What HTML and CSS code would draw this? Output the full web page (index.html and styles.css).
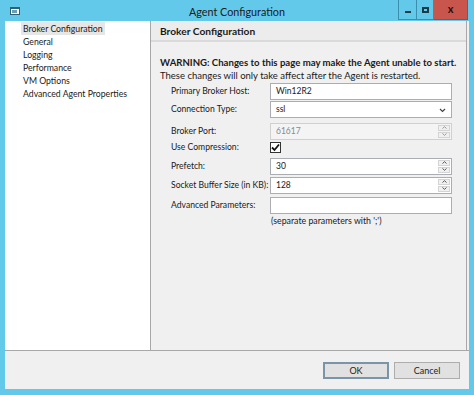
FILE: index.html
```html
<!DOCTYPE html>
<html lang="en">
<head>
    <meta charset="UTF-8">
    <title>Agent Configuration</title>
    <link rel="stylesheet" href="styles.css">
</head>
<body>
    <div class="window">
        <div class="titlebar">
            <svg class="app-icon" width="12" height="10" viewBox="0 0 12 10">
                <rect x="1.5" y="1.5" width="9" height="7" fill="#fff" stroke="#2f6076" stroke-width="1"/>
                <rect x="1" y="1" width="10" height="2" fill="#2f6076"/>
                <rect x="3" y="4" width="5" height="3" fill="#6a9fb5"/>
            </svg>
            <div class="title">Agent Configuration</div>
            <div class="controls">
                <div class="ctl min"><span class="bar"></span></div>
                <div class="ctl max"><span class="box"></span></div>
                <div class="ctl close">x</div>
            </div>
        </div>

        <div class="client">
            <div class="main">
                <ul class="tree">
                    <li class="selected">Broker Configuration</li>
                    <li>General</li>
                    <li>Logging</li>
                    <li>Performance</li>
                    <li>VM Options</li>
                    <li>Advanced Agent Properties</li>
                </ul>

                <div class="panel">
                    <div class="panel-header">Broker Configuration</div>
                    <div class="panel-body">
                        <p class="warning">WARNING: Changes to this page may make the Agent unable to start.</p>
                        <p class="note">These changes will only take affect after the Agent is restarted.</p>

                        <div class="row">
                            <label>Primary Broker Host:</label>
                            <div class="field">Win12R2</div>
                        </div>
                        <div class="row">
                            <label>Connection Type:</label>
                            <div class="field">ssl
                                <svg class="chev" width="7" height="5" viewBox="0 0 7 5"><path d="M1 1 L3.5 3.5 L6 1" fill="none" stroke="#444" stroke-width="1.2"/></svg>
                            </div>
                        </div>
                        <div class="row port-row">
                            <label>Broker Port:</label>
                            <div class="field disabled">61617
                                <div class="spin">
                                    <span><svg width="5" height="3" viewBox="0 0 5 3"><path d="M0.5 2.5 L2.5 0.7 L4.5 2.5" fill="none" stroke="#999" stroke-width="1"/></svg></span>
                                    <span><svg width="5" height="3" viewBox="0 0 5 3"><path d="M0.5 0.5 L2.5 2.3 L4.5 0.5" fill="none" stroke="#999" stroke-width="1"/></svg></span>
                                </div>
                            </div>
                        </div>
                        <div class="row check-row">
                            <label>Use Compression:</label>
                            <div class="checkbox">
                                <svg width="9" height="9" viewBox="0 0 9 9"><path d="M1 4.5 L3.5 7 L8 1.5" fill="none" stroke="#111" stroke-width="1.8"/></svg>
                            </div>
                        </div>
                        <div class="row prefetch-row">
                            <label>Prefetch:</label>
                            <div class="field">30
                                <div class="spin">
                                    <span><svg width="5" height="3" viewBox="0 0 5 3"><path d="M0.5 2.5 L2.5 0.7 L4.5 2.5" fill="none" stroke="#555" stroke-width="1"/></svg></span>
                                    <span><svg width="5" height="3" viewBox="0 0 5 3"><path d="M0.5 0.5 L2.5 2.3 L4.5 0.5" fill="none" stroke="#555" stroke-width="1"/></svg></span>
                                </div>
                            </div>
                        </div>
                        <div class="row socket-row">
                            <label>Socket Buffer Size (in KB):</label>
                            <div class="field">128
                                <div class="spin">
                                    <span><svg width="5" height="3" viewBox="0 0 5 3"><path d="M0.5 2.5 L2.5 0.7 L4.5 2.5" fill="none" stroke="#555" stroke-width="1"/></svg></span>
                                    <span><svg width="5" height="3" viewBox="0 0 5 3"><path d="M0.5 0.5 L2.5 2.3 L4.5 0.5" fill="none" stroke="#555" stroke-width="1"/></svg></span>
                                </div>
                            </div>
                        </div>
                        <div class="row adv-row">
                            <label>Advanced Parameters:</label>
                            <div class="field"></div>
                        </div>
                        <p class="hint">(separate parameters with ';')</p>
                    </div>
                </div>
            </div>

            <div class="footer">
                <button class="default">OK</button>
                <button>Cancel</button>
            </div>
        </div>
    </div>
</body>
</html>
```

FILE: styles.css
```css
* {
    box-sizing: border-box;
    margin: 0;
    padding: 0;
}

body {
    font-family: Lato, "Liberation Sans", sans-serif;
    font-size: 9.5px;
    color: #1a1a1a;
    background-color: #62c9eb;
}

.window {
    width: 474px;
    height: 395px;
    display: flex;
    flex-direction: column;
    padding: 0 5px 6px 5px;
}

.titlebar {
    height: 21px;
    display: grid;
    grid-template-columns: 1fr auto 1fr;
    align-items: center;
}

.app-icon {
    margin-left: 4px;
}

.title {
    font-size: 10.8px;
    color: #1a1a1a;
    margin-top: 1px;
}

.controls {
    display: flex;
    justify-self: end;
    align-self: start;
    height: 20px;
    margin-right: 1px;
}

.ctl {
    width: 19px;
    height: 20px;
    border: 1px solid #3b8fac;
    border-top: none;
    display: flex;
    align-items: center;
    justify-content: center;
}

.ctl + .ctl {
    border-left: none;
}

.ctl.max {
    width: 17px;
}

.ctl.close {
    width: 34px;
    background-color: #c8564c;
    border-color: #a8453c;
    color: #2a1010;
    font-weight: bold;
    font-size: 11px;
    padding-bottom: 2px;
}

.bar {
    width: 6px;
    height: 2px;
    background-color: #1c3b4a;
    margin-top: 4px;
}

.box {
    width: 7px;
    height: 6px;
    border: 2px solid #1c3b4a;
}

.client {
    flex: 1;
    background-color: #f0f0f0;
    display: flex;
    flex-direction: column;
}

.main {
    height: 330px;
    display: flex;
    border-bottom: 1px solid #a8a8a8;
}

.tree {
    list-style: none;
    width: 146px;
    background-color: #fff;
    border-right: 1px solid #a8a8a8;
    padding: 1px 0 0 16px;
    font-size: 8.7px;
}

.tree li {
    height: 13px;
    line-height: 13px;
    padding-left: 2px;
    display: table;
}

.tree li.selected {
    background-color: #e6e6e6;
    padding-right: 2px;
}

.panel {
    flex: 1;
    display: flex;
    flex-direction: column;
    border-right: 1px solid #a8a8a8;
    margin-right: 2px;
}

.panel-header {
    height: 21px;
    line-height: 20px;
    font-weight: bold;
    font-size: 10.2px;
    padding-left: 9px;
    border-bottom: 2px solid #dadada;
    background-color: #ececec;
}

.panel-body {
    padding: 14px 0 0 9px;
}

.warning {
    font-weight: bold;
    font-size: 9.6px;
    line-height: 13px;
}

.note {
    line-height: 13px;
}

.row {
    display: flex;
    align-items: center;
    height: 18px;
    padding-left: 11px;
}

.row label {
    width: 99px;
    white-space: nowrap;
    font-size: 8.6px;
}

.field {
    flex: 1;
    height: 17px;
    margin-right: 14px;
    background-color: #fff;
    border: 1px solid #abadb3;
    padding-left: 5px;
    font-size: 8.5px;
    display: flex;
    align-items: center;
    position: relative;
}

.field.disabled {
    background-color: #f4f4f4;
    color: #8a8a8a;
    border-color: #d0d0d0;
}

.chev {
    position: absolute;
    right: 5px;
    top: 6px;
}

.spin {
    position: absolute;
    right: 1px;
    top: 1px;
    bottom: 1px;
    width: 12px;
    display: flex;
    flex-direction: column;
    gap: 1px;
}

.spin span {
    flex: 1;
    display: flex;
    align-items: center;
    justify-content: center;
    background-color: #f0f0f0;
    border: 1px solid #d4d4d4;
}

.port-row {
    margin-top: 4px;
}

.check-row {
    height: 14px;
}

.prefetch-row {
    margin-top: 3px;
}

.socket-row {
    margin-top: 1px;
}

.adv-row {
    margin-top: 2px;
}

.checkbox {
    width: 11px;
    height: 11px;
    border: 1px solid #333;
    background-color: #fff;
    display: flex;
    align-items: center;
    justify-content: center;
}

.hint {
    padding-left: 111px;
    font-size: 8.8px;
    line-height: 13px;
}

.footer {
    flex: 1;
    display: flex;
    justify-content: flex-end;
    align-items: center;
    gap: 5px;
    padding-right: 9px;
    padding-top: 1px;
}

button {
    font-family: Lato, "Liberation Sans", sans-serif;
    font-size: 9px;
    width: 66px;
    height: 17px;
    background-color: #e1e1e1;
    border: 1px solid #adadad;
    color: #1e1e1e;
}

button.default {
    border: 2px solid #7a94a8;
}
```
